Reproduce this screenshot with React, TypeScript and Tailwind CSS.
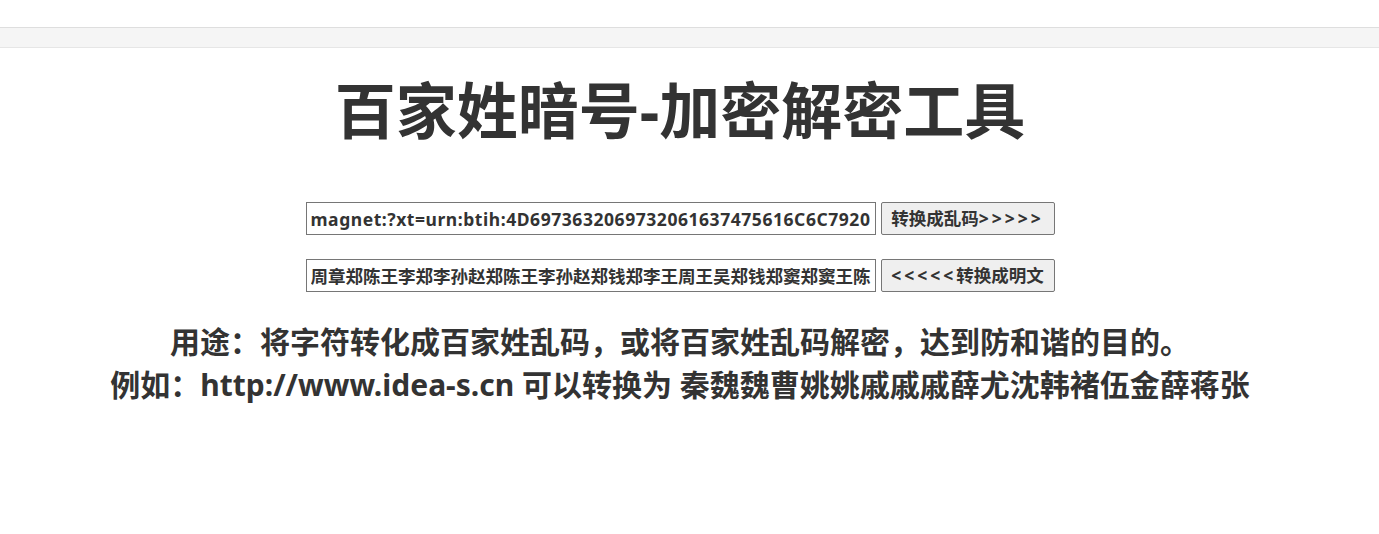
const font = { fontFamily: '"Noto Sans", "Noto Sans CJK SC", sans-serif' };

export default function App() {
  return (
    <div className="min-h-screen bg-white text-[#333]" style={font}>
      <div className="h-[27px]" />
      <div className="h-[21px] border-t border-b border-t-[#dedede] border-b-[#e6e6e6] bg-[#f5f5f5]" />
      <div className="w-[1360px]">
        <h1 className="mt-[26px] text-center text-[61px] font-bold leading-[74px]">百家姓暗号-加密解密工具</h1>

        <div className="mt-[54px] flex justify-center gap-[5px]">
          <input
            className="h-[33px] w-[570px] border border-[#767676] bg-white px-[4px] text-[17.5px] font-bold tracking-[0.55px] text-[#333] outline-none"
            defaultValue="magnet:?xt=urn:btih:4D6973632069732061637475616C6C7920"
          />
          <button className="h-[33px] w-[174px] rounded-[2px] border border-[#767676] bg-[#efefef] text-[17.5px] font-bold text-[#333]">
            转换成乱码<span className="tracking-[3px]">&gt;&gt;&gt;&gt;&gt;</span>
          </button>
        </div>

        <div className="mt-[24px] flex justify-center gap-[5px]">
          <input
            className="h-[33px] w-[570px] border border-[#767676] bg-white px-[4px] text-[17.5px] font-bold text-[#333] outline-none"
            defaultValue="周章郑陈王李郑李孙赵郑陈王李孙赵郑钱郑李王周王吴郑钱郑窦郑窦王陈"
          />
          <button className="h-[33px] w-[174px] rounded-[2px] border border-[#767676] bg-[#efefef] text-[17.5px] font-bold text-[#333]">
            <span className="tracking-[3px]">&lt;&lt;&lt;&lt;&lt;</span>转换成明文
          </button>
        </div>

        <div className="mt-[28px] text-center text-[30px] font-bold leading-[43px]">
          <p>用途：将字符转化成百家姓乱码，或将百家姓乱码解密，达到防和谐的目的。</p>
          <p>例如：http://www.idea-s.cn 可以转换为 秦魏魏曹姚姚戚戚戚薛尤沈韩褚伍金薛蒋张</p>
        </div>
      </div>
    </div>
  );
}
